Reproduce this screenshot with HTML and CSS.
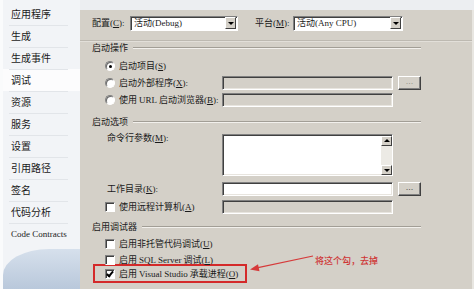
FILE: index.html
```html
<!DOCTYPE html>
<html lang="zh-CN">
<head>
  <meta charset="UTF-8">
  <title>项目属性 - 调试</title>
  <link rel="stylesheet" href="styles.css">
</head>
<body>
  <div class="window">
    <nav class="sidebar">
      <ul class="tabs">
        <li>应用程序</li>
        <li>生成</li>
        <li>生成事件</li>
        <li class="active">调试</li>
        <li>资源</li>
        <li>服务</li>
        <li>设置</li>
        <li>引用路径</li>
        <li>签名</li>
        <li>代码分析</li>
        <li class="en-tab">Code Contracts</li>
      </ul>
      <div class="wave"></div>
    </nav>

    <main class="page">
      <div class="page-top"></div>
      <div class="panel">
        <div class="config-row">
          <span class="config-label">配置<span class="en">(<u>C</u>):</span></span>
          <div class="combo combo-config">
            <span class="combo-text">活动<span class="en">(Debug)</span></span>
            <span class="drop"></span>
          </div>
          <span class="config-label platform-label">平台<span class="en">(<u>M</u>):</span></span>
          <div class="combo combo-platform">
            <span class="combo-text">活动<span class="en">(Any CPU)</span></span>
            <span class="drop"></span>
          </div>
        </div>
        <div class="rule"></div>

        <div class="group-title title-start"><span>启动操作</span></div>
        <div class="field first-radio">
          <label class="opt"><i class="radio checked"></i><span>启动项目<span class="en">(<u>S</u>)</span></span></label>
        </div>
        <div class="field">
          <label class="opt"><i class="radio"></i><span>启动外部程序<span class="en">(<u>X</u>):</span></span></label>
          <div class="textbox disabled"></div>
          <div class="btn disabled">...</div>
        </div>
        <div class="field">
          <label class="opt"><i class="radio"></i><span>使用 <span class="en">URL</span> 启动浏览器<span class="en">(<u>B</u>):</span></span></label>
          <div class="textbox disabled"></div>
        </div>

        <div class="group-title title-options"><span>启动选项</span></div>
        <div class="field field-args">
          <span class="label">命令行参数<span class="en">(<u>M</u>):</span></span>
          <div class="textbox textarea">
            <div class="vscroll">
              <span class="sbtn up"></span>
              <span class="track"></span>
              <span class="sbtn down"></span>
            </div>
          </div>
        </div>
        <div class="field field-dir">
          <span class="label">工作目录<span class="en">(<u>K</u>):</span></span>
          <div class="textbox"></div>
          <div class="btn">...</div>
        </div>
        <div class="field field-remote">
          <label class="opt"><i class="check"></i><span>使用远程计算机<span class="en">(<u>A</u>)</span></span></label>
          <div class="textbox disabled"></div>
        </div>

        <div class="group-title title-debug"><span>启用调试器</span></div>
        <div class="field check-first">
          <label class="opt"><i class="check"></i><span>启用非托管代码调试<span class="en">(<u>U</u>)</span></span></label>
        </div>
        <div class="field check-second">
          <label class="opt"><i class="check"></i><span>启用 <span class="en">SQL Server</span> 调试<span class="en">(<u>L</u>)</span></span></label>
        </div>
        <div class="marked">
          <label class="opt"><i class="check checked"></i><span>启用 <span class="en">Visual Studio</span> 承载进程<span class="en">(<u>O</u>)</span></span></label>
        </div>
      </div>
    </main>

    <svg class="arrow" width="474" height="289" viewBox="0 0 474 289">
      <line x1="313" y1="256" x2="258" y2="267.6" stroke="#d63a3a" stroke-width="1.2"/>
      <polygon points="250,269.5 259.5,271.2 258,264.3" fill="#d63a3a"/>
    </svg>
    <div class="note">将这个勾，去掉</div>
  </div>
</body>
</html>
```

FILE: styles.css
```css
:root {
  --panel: #d4d0c8;
  --shadow: #808080;
  --dark: #404040;
  --light: #ffffff;
  --side-bg: #f2f4f7;
  --mark: #d42a2a;
}

body {
  margin: 0;
  font-family: "Noto Sans CJK SC", sans-serif;
  font-size: 10px;
  line-height: 12px;
  color: #1a1a1a;
}

.en {
  font-family: "Liberation Serif", serif;
  font-size: 9px;
}

.window {
  position: relative;
  display: flex;
  width: 474px;
  height: 289px;
  overflow: hidden;
  background: #eceef1;
}

/* left tab list */
.sidebar {
  width: 80px;
  flex: none;
  display: flex;
  flex-direction: column;
  box-sizing: border-box;
  padding-top: 3px;
  background: var(--side-bg);
  border-left: 3px solid #fafbfc;
}

.tabs {
  list-style: none;
  margin: 0;
  padding: 0;
}

.tabs li {
  position: relative;
  height: 22px;
  line-height: 22px;
  padding-left: 8px;
}

.tabs li + li::before {
  content: '';
  position: absolute;
  top: 0;
  left: 6px;
  right: 12px;
  border-top: 1px solid #e2e5e9;
}

.tabs li.active {
  background: #fcfcfd;
}

.tabs li.en-tab {
  font-family: "Liberation Serif", serif;
  font-size: 9px;
}

.wave {
  margin-top: auto;
  height: 40px;
  border-top-left-radius: 46px 26px;
  background: linear-gradient(#d6e0ec, #b9c8db);
}

/* main page */
.page {
  flex: 1;
  display: flex;
  flex-direction: column;
}

.page-top {
  height: 10px;
  flex: none;
  background: #eceef1;
}

.panel {
  flex: 1;
  padding: 6px 0 0 12px;
  font-size: 9px;
  background: var(--panel);
  border-right: 2px solid #e8e6e1;
}

.config-row {
  display: flex;
  align-items: center;
  height: 14px;
}

.config-label {
  width: 38px;
  flex: none;
  white-space: nowrap;
}

.platform-label {
  margin-left: 17px;
}

.combo {
  display: flex;
  align-items: center;
  justify-content: space-between;
  flex: none;
  box-sizing: border-box;
  height: 15px;
  padding: 0 1px 0 3px;
  background: #fff;
  border: 1px solid;
  border-color: var(--shadow) var(--light) var(--light) var(--shadow);
  box-shadow: inset 1px 1px var(--dark);
  white-space: nowrap;
}

.combo-config {
  width: 108px;
}

.combo-platform {
  width: 110px;
}

.drop {
  position: relative;
  flex: none;
  width: 9px;
  height: 10px;
  background: var(--panel);
  border: 1px solid;
  border-color: var(--light) var(--dark) var(--dark) var(--light);
}

.drop::after {
  content: '';
  position: absolute;
  left: 2px;
  top: 4px;
  border-left: 3px solid transparent;
  border-right: 3px solid transparent;
  border-top: 3px solid #000;
}

.rule {
  margin: 10px 0 0 -12px;
  border-top: 1px solid #bdb9b1;
  border-bottom: 1px solid #e2dfd9;
}

.group-title {
  display: flex;
  align-items: center;
  gap: 5px;
  width: 329px;
  height: 12px;
}

.group-title::after {
  content: '';
  flex: 1;
  border-top: 1px solid #a29e96;
  border-bottom: 1px solid #f2f0ec;
}

.title-start { margin-top: 0; }
.title-options { margin-top: 9px; }
.title-debug { margin-top: 7px; }

.field {
  display: grid;
  grid-template-columns: 125px 171px 23px;
  column-gap: 5px;
  align-items: center;
  height: 14px;
  margin-top: 3px;
}

.first-radio { margin-top: 5px; }
.field-args { height: 42px; margin-top: 6px; align-items: start; }
.field-dir { margin-top: 6px; }
.field-remote { margin-top: 4px; }
.check-first { margin-top: 4px; }
.check-second { margin-top: 2px; }

.opt {
  display: flex;
  align-items: center;
  padding-left: 13px;
  white-space: nowrap;
}

.label {
  padding-left: 15px;
  white-space: nowrap;
}

.field-args .label {
  margin-top: -2px;
}

.radio {
  position: relative;
  flex: none;
  width: 10px;
  height: 10px;
  box-sizing: border-box;
  margin-right: 4px;
  border-radius: 50%;
  background: #fff;
  border: 1px solid;
  border-color: var(--shadow) var(--light) var(--light) var(--shadow);
  box-shadow: inset 1px 1px #6a6a6a;
}

.radio.checked::after {
  content: '';
  position: absolute;
  left: 3px;
  top: 3px;
  width: 3px;
  height: 3px;
  border-radius: 50%;
  background: #000;
}

.check {
  position: relative;
  flex: none;
  width: 10px;
  height: 10px;
  box-sizing: border-box;
  margin-right: 4px;
  background: #fff;
  border: 1px solid;
  border-color: var(--shadow) var(--light) var(--light) var(--shadow);
  box-shadow: inset 1px 1px var(--dark);
}

.check.checked::after {
  content: '';
  position: absolute;
  left: 2px;
  top: 0;
  width: 2px;
  height: 5px;
  border: solid #000;
  border-width: 0 2px 2px 0;
  transform: rotate(40deg);
}

.textbox {
  position: relative;
  box-sizing: border-box;
  height: 14px;
  background: #fff;
  border: 1px solid;
  border-color: var(--shadow) var(--light) var(--light) var(--shadow);
  box-shadow: inset 1px 1px var(--dark), inset -1px -1px #e8e5df;
}

.textbox.disabled {
  background: var(--panel);
}

.field .textbox {
  grid-column: 2;
}

.textbox.textarea {
  height: 42px;
}

.vscroll {
  position: absolute;
  top: 1px;
  right: 0;
  bottom: 0;
  width: 11px;
  display: flex;
  flex-direction: column;
  background: #eceae5;
}

.vscroll .track {
  flex: 1;
}

.sbtn {
  position: relative;
  height: 10px;
  box-sizing: border-box;
  background: var(--panel);
  border: 1px solid;
  border-color: var(--light) var(--dark) var(--dark) var(--light);
}

.sbtn::after {
  content: '';
  position: absolute;
  left: 2px;
  border-left: 3px solid transparent;
  border-right: 3px solid transparent;
}

.sbtn.up::after {
  top: 2px;
  border-bottom: 3px solid #000;
}

.sbtn.down::after {
  top: 3px;
  border-top: 3px solid #000;
}

.btn {
  grid-column: 3;
  box-sizing: border-box;
  height: 14px;
  text-align: center;
  line-height: 9px;
  color: #555;
  background: var(--panel);
  border: 1px solid;
  border-color: var(--light) var(--dark) var(--dark) var(--light);
  box-shadow: inset -1px -1px var(--shadow);
  font-family: "Liberation Sans", sans-serif;
  font-size: 9px;
}

.btn.disabled {
  color: #9a978f;
}

/* the boxed row called out by the annotation */
.marked {
  display: flex;
  align-items: center;
  box-sizing: border-box;
  width: 154px;
  height: 19px;
  margin: -3px 0 0 1px;
  border: 2px solid var(--mark);
}

.marked .opt {
  padding-left: 10px;
}

.arrow {
  position: absolute;
  left: 0;
  top: 0;
  pointer-events: none;
}

.note {
  position: absolute;
  left: 315px;
  top: 255px;
  font-size: 9px;
  font-weight: 500;
  line-height: 12px;
  color: #cf3636;
}
```
